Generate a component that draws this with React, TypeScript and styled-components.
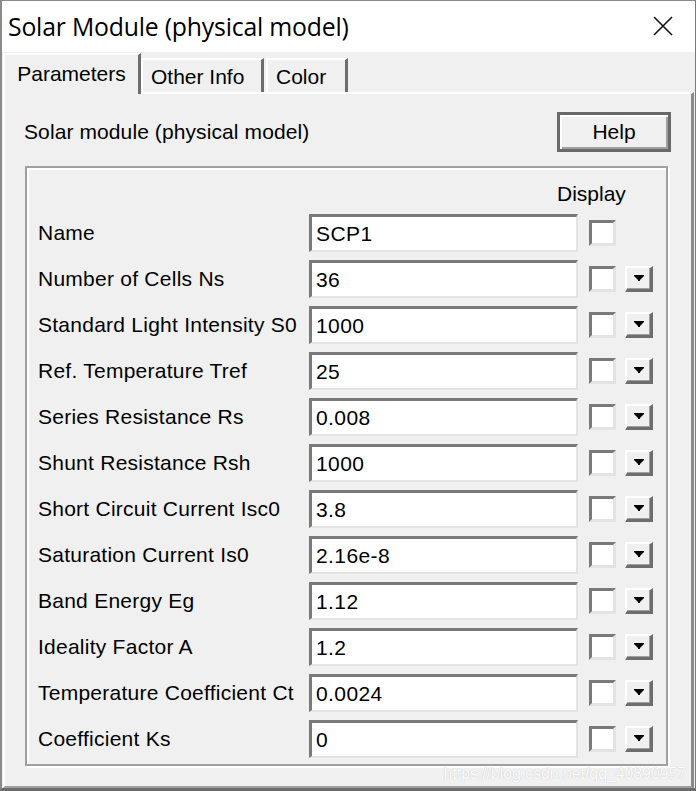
import React from "react";
import styled, { createGlobalStyle } from "styled-components";

const GlobalStyle = createGlobalStyle`
  html, body {
    margin: 0;
    padding: 0;
    background: #f0f0f0;
  }
  * {
    box-sizing: border-box;
  }
`;

interface Param {
  label: string;
  value: string;
  hasMenu: boolean;
}

const params: Param[] = [
  { label: "Name", value: "SCP1", hasMenu: false },
  { label: "Number of Cells Ns", value: "36", hasMenu: true },
  { label: "Standard Light Intensity S0", value: "1000", hasMenu: true },
  { label: "Ref. Temperature Tref", value: "25", hasMenu: true },
  { label: "Series Resistance Rs", value: "0.008", hasMenu: true },
  { label: "Shunt Resistance Rsh", value: "1000", hasMenu: true },
  { label: "Short Circuit Current Isc0", value: "3.8", hasMenu: true },
  { label: "Saturation Current Is0", value: "2.16e-8", hasMenu: true },
  { label: "Band Energy Eg", value: "1.12", hasMenu: true },
  { label: "Ideality Factor A", value: "1.2", hasMenu: true },
  { label: "Temperature Coefficient Ct", value: "0.0024", hasMenu: true },
  { label: "Coefficient Ks", value: "0", hasMenu: true },
];

const tabs = [
  { name: "Parameters", width: 138 },
  { name: "Other Info", width: 123 },
  { name: "Color", width: 82 },
];

const App: React.FC = () => {
  return (
    <>
      <GlobalStyle />
      <Window>
        <TitleBar>
          <Title>Solar Module (physical model)</Title>
          <CloseButton aria-label="Close">
            <svg width="20" height="20" viewBox="0 0 20 20">
              <path d="M1 1 L19 19 M19 1 L1 19" stroke="#111" strokeWidth="1.6" />
            </svg>
          </CloseButton>
        </TitleBar>

        <TabArea>
          <TabStrip>
            {tabs.map((t, i) => (
              <Tab key={t.name} $active={i === 0} $width={t.width}>
                {t.name}
              </Tab>
            ))}
          </TabStrip>

          <TabPane>
            <PaneHeader>
              <HeaderLabel>Solar module (physical model)</HeaderLabel>
              <HelpButton>Help</HelpButton>
            </PaneHeader>

            <GroupBox>
              <ParamGrid>
                <DisplayHead>Display</DisplayHead>
                {params.map((p) => (
                  <React.Fragment key={p.label}>
                    <FieldLabel>{p.label}</FieldLabel>
                    <Field>{p.value}</Field>
                    <CheckBox />
                    {p.hasMenu ? (
                      <MenuButton>
                        <svg width="10" height="6" viewBox="0 0 10 6">
                          <path d="M0 0 H10 V1 L6 5 V6 H4 V5 L0 1 Z" fill="#000" />
                        </svg>
                      </MenuButton>
                    ) : (
                      <span />
                    )}
                  </React.Fragment>
                ))}
              </ParamGrid>
            </GroupBox>
          </TabPane>
        </TabArea>

        <Watermark>https://blog.csdn.net/qq_40890957</Watermark>
      </Window>
    </>
  );
};

const uiFont = `"Liberation Sans", Arial, sans-serif`;

const Window = styled.div`
  position: relative;
  width: 696px;
  height: 791px;
  display: flex;
  flex-direction: column;
  background: #f0f0f0;
  border-top: 1px solid #8a8a8a;
  border-left: 2px solid #8a8a8a;
  border-right: 1px solid #7a7a7a;
  border-bottom: 3px solid #6d6d6d;
  font-family: ${uiFont};
  color: #000;
`;

const TitleBar = styled.div`
  height: 51px;
  flex: none;
  display: flex;
  align-items: center;
  justify-content: space-between;
  background: #fff;
  padding: 0 22px 2px 6px;
`;

const Title = styled.div`
  font-family: "Open Sans", "Noto Sans", sans-serif;
  font-size: 24.8px;
  letter-spacing: -0.2px;
  color: #000;
`;

const CloseButton = styled.div`
  width: 20px;
  height: 20px;
  display: flex;
`;

const TabArea = styled.div`
  flex: 1;
  display: flex;
  flex-direction: column;
  padding: 0 0 0 1px;
`;

const TabStrip = styled.div`
  height: 40px;
  flex: none;
  display: flex;
  align-items: flex-end;
  gap: 2px;
  padding-right: 2px;
`;

const Tab = styled.div<{ $active: boolean; $width: number }>`
  position: relative;
  z-index: ${(p) => (p.$active ? 1 : 0)};
  width: ${(p) => p.$width}px;
  height: ${(p) => (p.$active ? 41 : 34)}px;
  margin-bottom: ${(p) => (p.$active ? -2 : 0)}px;
  margin-right: ${(p) => (p.$active ? -2 : 0)}px;
  display: flex;
  align-items: center;
  justify-content: ${(p) => (p.$active ? "center" : "flex-start")};
  padding: ${(p) => (p.$active ? "0 0 2px 0" : "1px 0 0 8px")};
  background: #f0f0f0;
  border-top: 2px solid #fff;
  border-left: 2px solid #fff;
  border-right: 3px solid #6d6d6d;
  font-size: 21px;
  white-space: nowrap;
`;

const TabPane = styled.div`
  flex: 1;
  display: flex;
  flex-direction: column;
  background: #f0f0f0;
  border-top: 2px solid #fff;
  border-left: 2px solid #fff;
  border-right: 3px solid #8a8a8a;
  border-bottom: 2px solid #a0a0a0;
  margin-right: 1px;
  padding: 18px 20px 0 19px;
`;

const PaneHeader = styled.div`
  height: 40px;
  display: flex;
  align-items: center;
  justify-content: space-between;
`;

const HeaderLabel = styled.div`
  font-size: 21px;
  letter-spacing: 0.1px;
`;

const HelpButton = styled.div`
  width: 114px;
  height: 40px;
  display: flex;
  align-items: center;
  justify-content: center;
  background: #f0f0f0;
  border: 3px solid #696969;
  box-shadow: inset 2px 2px 0 #fff, inset -2px -2px 0 #a0a0a0;
  font-size: 21px;
`;

const GroupBox = styled.div`
  margin: 14px 3px 0 1px;
  border: 2px solid #a0a0a0;
  box-shadow: inset 2px 2px 0 #fff, 2px 2px 0 #fff;
  padding: 14px 0 6px 11px;
`;

const ParamGrid = styled.div`
  display: grid;
  grid-template-columns: 271px 280px 36px 28px;
  grid-template-rows: 24px;
  grid-auto-rows: 38px;
  row-gap: 8px;
  align-items: center;
`;

const DisplayHead = styled.div`
  grid-column: 3 / 5;
  align-self: start;
  margin-left: -32px;
  font-size: 21px;
  line-height: 24px;
`;

const FieldLabel = styled.div`
  grid-column: 1;
  font-size: 21px;
  letter-spacing: 0.25px;
  white-space: nowrap;
`;

const Field = styled.div`
  width: 269px;
  height: 38px;
  display: flex;
  align-items: center;
  padding-left: 4px;
  background: #fff;
  border-style: solid;
  border-width: 3px 2px 2px 3px;
  border-color: #7a7a7a #e3e3e3 #e3e3e3 #7a7a7a;
  font-size: 21px;
  letter-spacing: 0.4px;
`;

const CheckBox = styled.div`
  width: 27px;
  height: 26px;
  background: #fff;
  border-style: solid;
  border-width: 3px;
  border-color: #7a7a7a #e3e3e3 #e3e3e3 #7a7a7a;
  margin-top: -1px;
`;

const MenuButton = styled.div`
  width: 28px;
  height: 26px;
  display: flex;
  align-items: center;
  justify-content: center;
  background: #f0f0f0;
  border-style: solid;
  border-width: 2px 3px 3px 2px;
  border-color: #fff #6d6d6d #6d6d6d #fff;
  box-shadow: inset -1px -1px 0 #a0a0a0;
  padding-bottom: 2px;
`;

const Watermark = styled.div`
  position: absolute;
  right: 9px;
  bottom: 5px;
  font-family: ${uiFont};
  font-size: 15.8px;
  color: #fbfbfb;
  text-shadow: 0 0 1px #bdbdbd;
  pointer-events: none;
`;

export default App;
